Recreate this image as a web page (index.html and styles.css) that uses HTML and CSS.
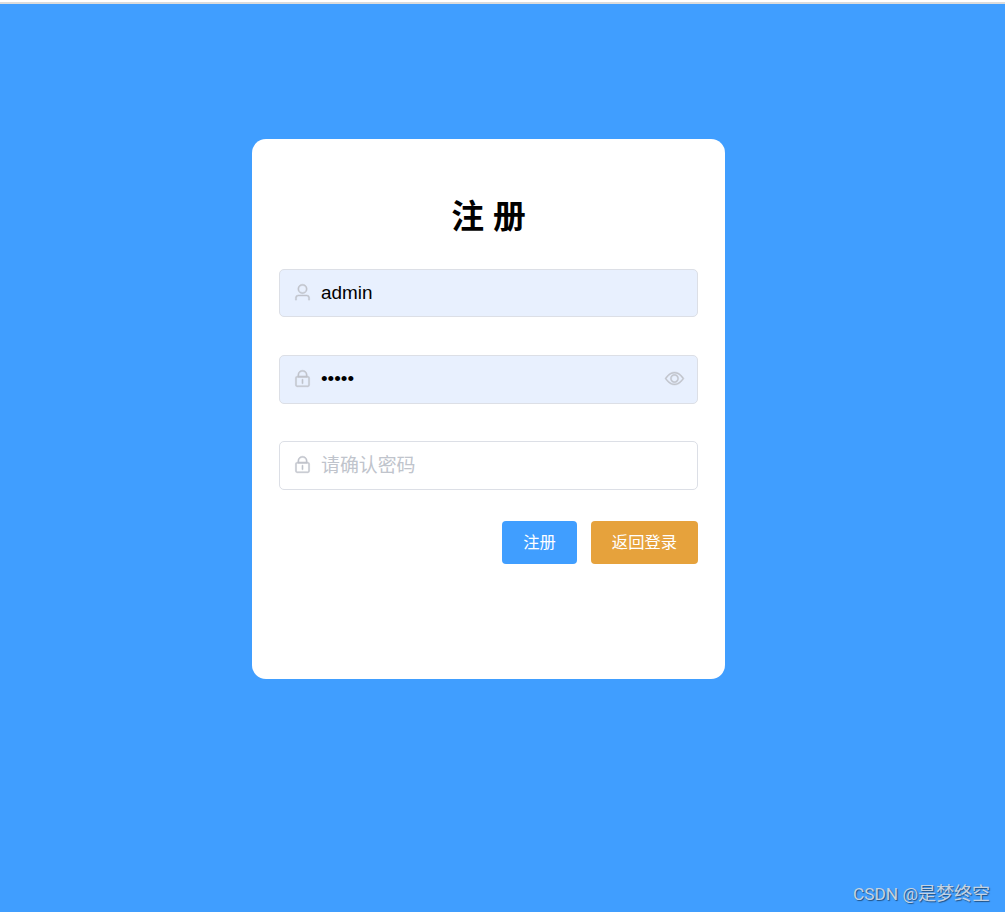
FILE: index.html
```html
<!DOCTYPE html>
<html lang="zh-CN">
<head>
  <meta charset="UTF-8">
  <title>注册</title>
  <link rel="stylesheet" href="styles.css">
</head>
<body>

<div class="wrapper">
  <form class="register-box">
    <h1 class="title">注 册</h1>

    <div class="input-row user">
      <svg class="icon" viewBox="0 0 1024 1024"><path d="M512 512a192 192 0 1 0 0-384 192 192 0 0 0 0 384zm0 64a256 256 0 1 1 0-512 256 256 0 0 1 0 512zm320 320v-96a96 96 0 0 0-96-96H288a96 96 0 0 0-96 96v96a32 32 0 1 1-64 0v-96a160 160 0 0 1 160-160h448a160 160 0 0 1 160 160v96a32 32 0 1 1-64 0z"/></svg>
      <input class="field" type="text" value="admin" placeholder="请输入账号">
    </div>

    <div class="input-row">
      <svg class="icon" viewBox="0 0 1024 1024"><path d="M224 448a32 32 0 0 0-32 32v384a32 32 0 0 0 32 32h576a32 32 0 0 0 32-32V480a32 32 0 0 0-32-32H224zm0-64h576a96 96 0 0 1 96 96v384a96 96 0 0 1-96 96H224a96 96 0 0 1-96-96V480a96 96 0 0 1 96-96z"/><path d="M512 544a32 32 0 0 1 32 32v192a32 32 0 1 1-64 0V576a32 32 0 0 1 32-32zm192-160v-64a192 192 0 1 0-384 0v64h384zM512 64a256 256 0 0 1 256 256v128H256V320A256 256 0 0 1 512 64z"/></svg>
      <input class="field" type="password" value="admin" placeholder="请输入密码">
      <svg class="icon" viewBox="0 0 1024 1024"><path d="M512 160c320 0 512 352 512 352S832 864 512 864 0 512 0 512s192-352 512-352zm0 64c-225.280 0-384.128 208.064-436.800 288 52.608 79.872 211.456 288 436.800 288 225.280 0 384.128-208.064 436.800-288-52.608-79.872-211.456-288-436.800-288zm0 64a224 224 0 1 1 0 448 224 224 0 0 1 0-448zm0 64a160.192 160.192 0 0 0-160 160c0 88.192 71.744 160 160 160s160-71.808 160-160-71.744-160-160-160z"/></svg>
    </div>

    <div class="input-row empty">
      <svg class="icon" viewBox="0 0 1024 1024"><path d="M224 448a32 32 0 0 0-32 32v384a32 32 0 0 0 32 32h576a32 32 0 0 0 32-32V480a32 32 0 0 0-32-32H224zm0-64h576a96 96 0 0 1 96 96v384a96 96 0 0 1-96 96H224a96 96 0 0 1-96-96V480a96 96 0 0 1 96-96z"/><path d="M512 544a32 32 0 0 1 32 32v192a32 32 0 1 1-64 0V576a32 32 0 0 1 32-32zm192-160v-64a192 192 0 1 0-384 0v64h384zM512 64a256 256 0 0 1 256 256v128H256V320A256 256 0 0 1 512 64z"/></svg>
      <input class="field" type="password" placeholder="请确认密码">
    </div>

    <div class="buttons">
      <button class="btn btn-primary" type="button">注册</button>
      <button class="btn btn-warning" type="button">返回登录</button>
    </div>
  </form>

  <div class="watermark"><span class="site">CSDN @</span>是梦终空</div>
</div>

</body>
</html>
```

FILE: styles.css
```css
* {
  box-sizing: border-box;
}
body {
  margin: 0;
  padding-top: 2px;
  background: white;
  font-family: "Liberation Sans", "Noto Sans CJK SC", sans-serif;
}
.wrapper {
  display: flex;
  flex-direction: column;
  height: 910px;
  padding-top: 135px;
  border-top: 2px solid #dcdcdc;
  background: #409eff;
}
.register-box {
  width: 473px;
  height: 540px;
  margin-left: 252px;
  padding: 54px 27px 27px;
  background: white;
  border-radius: 14px;
}
.title {
  margin: 0 0 28px;
  font-size: 32.8px;
  line-height: 48px;
  text-align: center;
}
.input-row {
  display: flex;
  align-items: center;
  height: 49px;
  margin-bottom: 37px;
  padding: 0 13px 2px 13px;
  background: #e8f0fe;
  border: 1px solid #dcdfe6;
  border-radius: 5px;
  color: #c0c4cc;
}
.input-row.user {
  height: 48px;
  margin-bottom: 38px;
  padding-bottom: 1px;
}
.input-row.empty {
  background: white;
  margin-bottom: 31px;
}
.icon {
  flex: none;
  width: 19px;
  height: 19px;
  overflow: visible;
  fill: currentColor;
  stroke: currentColor;
  stroke-width: 22;
}
.field {
  flex: 1;
  min-width: 0;
  margin-left: 9px;
  padding: 0;
  border: none;
  outline: none;
  background: none;
  color: black;
  font-family: inherit;
  font-size: 18.9px;
}
.empty .field {
  padding-top: 2px;
}
.field::placeholder {
  color: #c0c4cc;
}
.buttons {
  display: flex;
  justify-content: flex-end;
  gap: 14px;
}
.btn {
  height: 43px;
  padding: 0 21px 3px;
  border: none;
  border-radius: 4px;
  color: white;
  font-family: inherit;
  font-size: 16.3px;
  cursor: pointer;
}
.btn-primary {
  background: #409eff;
}
.btn-warning {
  background: #e6a23c;
}
.watermark {
  margin-top: auto;
  padding: 0 15px 5px 0;
  color: #c5d3e2;
  font-family: "Noto Sans CJK SC", sans-serif;
  font-size: 18px;
  line-height: 26px;
  text-align: right;
  text-shadow: 1px 1px 1px rgba(0, 0, 0, 0.5);
}
.site {
  font-family: Roboto, sans-serif;
  font-size: 17.3px;
}
```
